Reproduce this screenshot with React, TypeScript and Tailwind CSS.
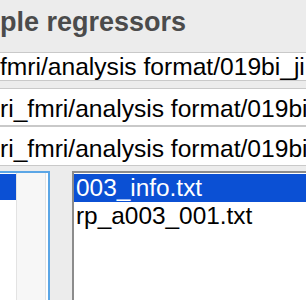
import React from "react";

const fields = [
    { text: "fmri/analysis format/019bi_ji", cls: "h-[29px] mt-0 pt-0" },
    { text: "ri_fmri/analysis format/019bi", cls: "h-[38px] mt-[7px] pt-[4px]" },
    { text: "ri_fmri/analysis format/019bi", cls: "h-[40px] mt-0 pt-[6px]" },
];

const files = ["003_info.txt", "rp_a003_001.txt"];

const App = () => {
    return (
        <div className="w-[306px] h-[300px] overflow-hidden bg-[#ececec] font-['Liberation_Sans',Arial,sans-serif]">
            {/* title */}
            <div className="h-[52px] pt-[7px] pl-0">
                <p className="text-[27px] leading-[31px] font-bold text-[#4b4b4b] whitespace-nowrap">
                    ple regressors
                </p>
            </div>
            {/* path fields */}
            {fields.map((item, i) => (
                <div
                    key={i}
                    className={`${item.cls} border-t border-b border-[#c9c9c9] bg-white flex items-center overflow-hidden`}
                >
                    <p className="text-[24.6px] leading-[28px] text-black whitespace-nowrap">
                        {item.text}
                    </p>
                </div>
            ))}
            {/* lists */}
            <div className="flex flex-row mt-[5px] h-[130px]">
                {/* left list, focused */}
                <div className="w-[50px] border-t-2 border-r-2 border-[#5ba6e6] flex flex-row">
                    <div className="w-[16px] bg-white pt-px">
                        <div className="h-[26px] bg-[#0b50d4]" />
                    </div>
                    <div className="w-[30px] bg-[#f7f7f7] border-l border-r border-[#e3e3e3]" />
                    <div className="w-[2px] bg-white" />
                </div>
                <div className="w-[22px]" />
                {/* right list */}
                <div className="flex-1 border-t-2 border-l-2 border-[#8c8c8c] bg-white pt-px overflow-hidden">
                    {files.map((f, i) => (
                        <div
                            key={i}
                            className={`h-[28px] pl-[2px] flex items-center ${
                                i === 0 ? "bg-[#0b50d4] text-white" : "text-black"
                            }`}
                        >
                            <p className="text-[24.4px] leading-[28px] whitespace-nowrap">
                                {f}
                            </p>
                        </div>
                    ))}
                </div>
            </div>
        </div>
    );
};

export default App;
